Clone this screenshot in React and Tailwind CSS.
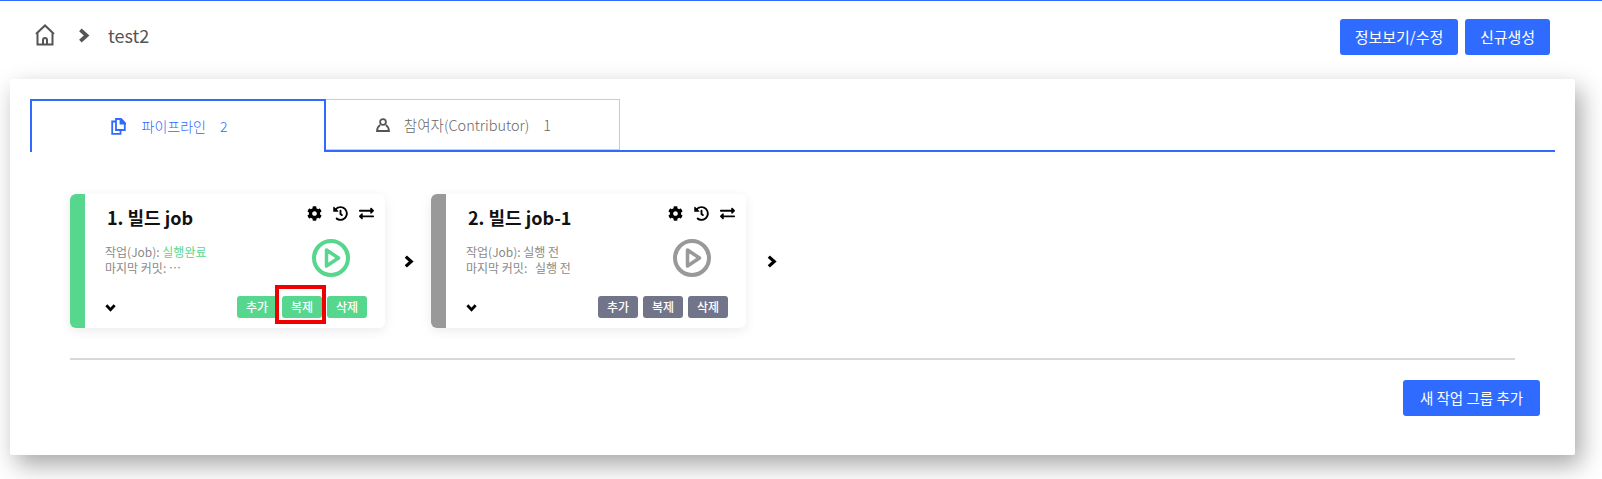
import { FaCog, FaHistory, FaExchangeAlt } from "react-icons/fa";

const font = { fontFamily: '"Noto Sans CJK KR", "Noto Sans", sans-serif' };

function HomeIcon() {
  return (
    <svg width="22" height="22" viewBox="0 0 21 22" fill="none" stroke="#555" strokeWidth="2">
      <path d="M1.5 10 L10.5 1.5 L19.5 10 M3 8.5 V20.5 H18 V8.5" />
      <path d="M8.5 20.5 V16 Q8.5 14 10.5 14 Q12.5 14 12.5 16 V20.5" />
    </svg>
  );
}

function ChevronRight({ size, color, width = 3 }) {
  return (
    <svg width={size} height={size} viewBox="0 0 12 12" fill="none" stroke={color} strokeWidth={width}>
      <path d="M3.5 1.5 L8.5 6 L3.5 10.5" />
    </svg>
  );
}

function ChevronDown() {
  return (
    <svg width="11" height="11" viewBox="0 0 12 12" fill="none" stroke="#000" strokeWidth="3">
      <path d="M1.5 3.5 L6 8.5 L10.5 3.5" />
    </svg>
  );
}

function CopyIcon() {
  return (
    <svg width="15" height="17" viewBox="0 0 15 17" fill="none" stroke="#2f6bff" strokeWidth="1.8">
      <path d="M5 3.5 H1.2 V15.8 H9.5 V12" />
      <path d="M5 12 V1 H10 L13.8 4.8 V12 Z" />
      <path d="M9.5 1 V5.5 H13.8 Z" fill="#2f6bff" />
    </svg>
  );
}

function PersonIcon() {
  return (
    <svg width="14" height="14" viewBox="0 0 14 14" fill="none" stroke="#555" strokeWidth="1.8">
      <circle cx="7" cy="4" r="2.9" />
      <path d="M4.2 7 Q1.2 9 1 13 H13 Q12.8 9 9.8 7" />
    </svg>
  );
}

function PlayCircle({ color }) {
  return (
    <svg width="38" height="38" viewBox="0 0 38 38" fill="none" stroke={color} strokeWidth="4">
      <circle cx="19" cy="19" r="17" />
      <path d="M14.5 11 L26.5 19 L14.5 27 Z" strokeWidth="3.5" strokeLinejoin="round" />
    </svg>
  );
}

function JobCard({ title, barClass, btnClass, playColor, status, statusClass, commit, outlined }) {
  return (
    <div className="flex w-[315px] h-[134px] rounded-md bg-white shadow-[0_3px_12px_rgba(0,0,0,0.08)] overflow-hidden">
      <div className={`w-[15px] ${barClass}`} />
      <div className="flex-1 pl-[20px] pr-[18px] flex flex-col">
        <div className="flex justify-between items-start h-[45px]">
          <div className="pt-[10px] pl-[2px] text-[18px] leading-[27px] font-bold text-[#111]">{title}</div>
          <div className="flex items-center gap-[11px] pt-[12px] -mr-[7px] text-[15px] text-black">
            <FaCog />
            <FaHistory />
            <FaExchangeAlt />
          </div>
        </div>
        <div className="flex justify-between h-[57px]">
          <div className="text-[12px] leading-[16px] text-[#8a8a8a] pt-[5px]">
            <div>작업(Job): <span className={statusClass}>{status}</span></div>
            <div>마지막 커밋: {commit}</div>
          </div>
          <div className="pr-[17px]">
            <PlayCircle color={playColor} />
          </div>
        </div>
        <div className="flex justify-between items-center">
          <ChevronDown />
          <div className="flex gap-[5px]">
            {["추가", "복제", "삭제"].map((label) => (
              <div key={label} className="relative">
                <button className={`block w-[40px] h-[22px] rounded-[3px] text-white text-[12px] font-medium ${btnClass}`}>{label}</button>
                {outlined && label === "복제" && (
                  <div className="absolute left-[-7px] top-[-11px] w-[51px] h-[39px] border-[4px] border-[#f00000]" />
                )}
              </div>
            ))}
          </div>
        </div>
      </div>
    </div>
  );
}

export default function App() {
  return (
    <div className="w-[1602px] h-[479px] bg-white border-t border-[#2f6bff] overflow-hidden" style={font}>
      <div className="h-[78px] pl-[34px] pr-[52px] pt-[18px] flex justify-between items-start">
        <div className="flex items-center h-[32px]">
          <HomeIcon />
          <div className="ml-[20px]"><ChevronRight size={15} color="#555" /></div>
          <span className="ml-[17px] text-[18px] text-[#555]">test2</span>
        </div>
        <div className="flex gap-[7px]">
          <button className="w-[118px] h-[36px] rounded-[3px] bg-[#2f6bff] text-white text-[15px]">정보보기/수정</button>
          <button className="w-[85px] h-[36px] rounded-[3px] bg-[#2f6bff] text-white text-[15px]">신규생성</button>
        </div>
      </div>

      <div className="ml-[10px] w-[1565px] h-[376px] bg-white rounded-[2px] shadow-[6px_10px_24px_rgba(0,0,0,0.35)] pt-[20px] px-[20px]">
        <div className="flex w-[1525px] h-[53px] border-b-2 border-[#2f6bff]">
          <div className="w-[296px] h-[53px] border-2 border-b-0 border-[#2f6bff] bg-white flex items-center justify-center gap-[14px] pr-[18px] text-[14px] font-light text-[#2f6bff]">
            <CopyIcon />
            <span className="ml-[2px]">파이프라인</span>
            <span>2</span>
          </div>
          <div className="w-[294px] h-[51px] border border-l-0 border-[#ccc] flex items-center justify-center gap-[14px] pr-[18px] text-[14.5px] font-light text-[#666]">
            <PersonIcon />
            <span>참여자(Contributor)</span>
            <span>1</span>
          </div>
        </div>

        <div className="flex pt-[42px] pl-[40px]">
          <JobCard
            title="1. 빌드 job"
            barClass="bg-[#57d68d]"
            btnClass="bg-[#57d68d]"
            playColor="#57d68d"
            status="실행완료"
            statusClass="text-[#57d68d]"
            commit="⋯"
            outlined
          />
          <div className="w-[46px] flex items-center justify-center">
            <ChevronRight size={13} color="#000" />
          </div>
          <JobCard
            title="2. 빌드 job-1"
            barClass="bg-[#999999]"
            btnClass="bg-[#72758a]"
            playColor="#999999"
            status="실행 전"
            statusClass=""
            commit={"\u2009 실행 전"}
          />
          <div className="w-[50px] flex items-center justify-center">
            <ChevronRight size={13} color="#000" />
          </div>
        </div>

        <div className="ml-[40px] w-[1445px] mt-[30px] border-t-2 border-[#d8d8d8]" />
        <div className="flex justify-end w-[1510px] mt-[20px]">
          <button className="w-[137px] h-[36px] rounded-[3px] bg-[#2f6bff] text-white text-[14.5px]">새 작업 그룹 추가</button>
        </div>
      </div>
    </div>
  );
}
